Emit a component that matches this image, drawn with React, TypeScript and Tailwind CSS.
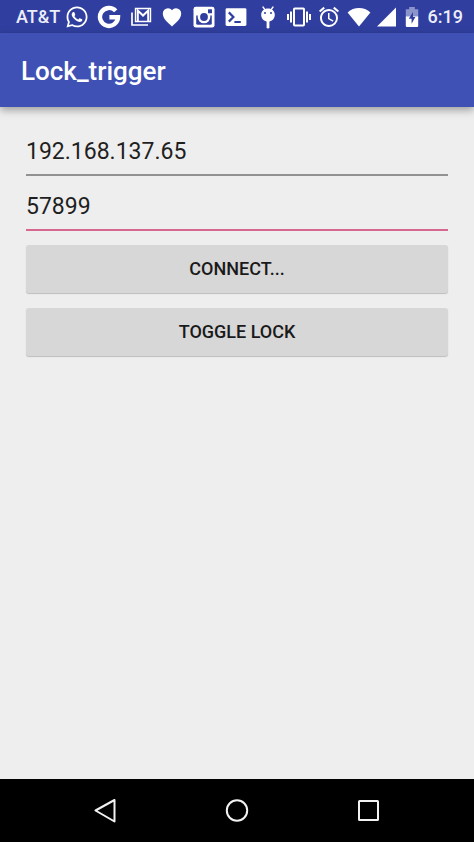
import React, { useState } from 'react';
import { FaWhatsapp } from 'react-icons/fa';
import { MdAlarm } from 'react-icons/md';

type IconProps = { className?: string };

const GoogleIcon: React.FC<IconProps> = ({ className }) => (
  <svg viewBox="0 0 24 24" className={className} fill="none" stroke="currentColor" strokeWidth="4.4">
    <path d="M18.700 5.900A9 9 0 1 0 21 12.200H12.400" />
  </svg>
);

const MailStackIcon: React.FC<IconProps> = ({ className }) => (
  <svg viewBox="0 0 24 24" className={className} fill="none" stroke="currentColor">
    <path d="M3 7.500V20h16" strokeWidth="1.700" />
    <path d="M6.500 3.500h15v13h-15z" strokeWidth="1.400" />
    <path d="M8.800 16V5.500l5.200 5 5.200-5V16" strokeWidth="2" />
  </svg>
);

const HeartIcon: React.FC<IconProps> = ({ className }) => (
  <svg viewBox="0 0 24 24" className={className} fill="currentColor">
    <path d="M12 21.400C7.200 17.400 2.800 13.600 2.800 8.600A5.200 5.200 0 0 1 8 3.300c1.600 0 3.100.8 4 2 .9-1.200 2.400-2 4-2a5.200 5.200 0 0 1 5.200 5.300c0 5-4.400 8.800-9.200 12.800z" />
  </svg>
);

const CameraIcon: React.FC<IconProps> = ({ className }) => (
  <svg viewBox="0 0 24 24" className={className}>
    <rect x="1.500" y="1.800" width="21" height="20.800" rx="2.400" fill="currentColor" />
    <path d="M4.200 10.500h15.600v7.800q0 1.500-1.500 1.500H5.700q-1.500 0-1.500-1.500z" fill="#303f9f" />
    <circle cx="12" cy="12" r="6.300" fill="currentColor" />
    <circle cx="12" cy="12" r="3.900" fill="#303f9f" />
    <rect x="16" y="4.300" width="4" height="4" rx=".5" fill="#303f9f" />
  </svg>
);

const TerminalIcon: React.FC<IconProps> = ({ className }) => (
  <svg viewBox="0 0 24 24" className={className}>
    <rect x="1.600" y="3.200" width="20.800" height="17.800" rx="1.400" fill="currentColor" />
    <path d="M4.800 7.400l4.600 4.600-4.600 4.600M10.400 17h6.400" fill="none" stroke="#303f9f" strokeWidth="2.200" />
  </svg>
);

const DebugIcon: React.FC<IconProps> = ({ className }) => (
  <svg viewBox="0 0 24 24" className={className}>
    <path d="M7 2l2.500 3.500M17 2l-2.500 3.500" stroke="currentColor" strokeWidth="1.300" strokeLinecap="round" />
    <path
      d="M12 3.600c4 0 6.800 2.600 6.800 6.200 0 3.900-3 6.900-6.800 6.900s-6.800-3-6.800-6.900c0-3.600 2.800-6.200 6.800-6.200z"
      fill="currentColor"
    />
    <path d="M12 15v7.200" stroke="currentColor" strokeWidth="2.800" strokeLinecap="round" />
    <circle cx="9" cy="8" r="1" fill="#303f9f" />
    <circle cx="15" cy="8" r="1" fill="#303f9f" />
  </svg>
);

const VibrateIcon: React.FC<IconProps> = ({ className }) => (
  <svg viewBox="0 0 24 24" className={className} fill="none" stroke="currentColor">
    <rect x="7" y="3.500" width="10" height="17" rx=".8" strokeWidth="2" />
    <path d="M4 6.500v11M20 6.500v11M1 9v6M23 9v6" strokeWidth="2" />
  </svg>
);

const WifiIcon: React.FC<IconProps> = ({ className }) => (
  <svg viewBox="0 0 24 24" className={className} fill="currentColor">
    <path d="M12 21.400L.6 7.400C3.800 4.500 7.700 3 12 3s8.200 1.500 11.400 4.400z" />
  </svg>
);

const SignalIcon: React.FC<IconProps> = ({ className }) => (
  <svg viewBox="0 0 22 22" className={className} fill="currentColor">
    <path d="M0 20.500L19 1.500v19z" />
  </svg>
);

const BatteryIcon: React.FC<IconProps> = ({ className }) => (
  <svg viewBox="0 0 14 22" className={className}>
    <path d="M4.200 1h5.600v2.200h3.400v8H.8v-8h3.400z" fill="#8c95cb" />
    <path d="M.8 10.500h12.400V20q0 1-1 1H1.800q-1 0-1-1z" fill="currentColor" />
    <path d="M8 6l-4.200 6.800h2.800v5L10.400 11H8z" fill="#303f9f" />
  </svg>
);

const StatusBar: React.FC = () => (
  <div className="flex h-[33px] items-center bg-[#303f9f] pl-4 pr-[11px] text-white">
    <span className="w-[49px] text-[18px] font-medium leading-6 text-[#eceefa]">AT&amp;T</span>
    <div className="mr-[7px] flex flex-1 items-center justify-between">
      <FaWhatsapp className="size-6" />
      <GoogleIcon className="size-6" />
      <MailStackIcon className="size-6" />
      <HeartIcon className="size-6" />
      <CameraIcon className="size-6" />
      <TerminalIcon className="size-6" />
      <DebugIcon className="size-6" />
    </div>
    <div className="flex items-center gap-1.5">
      <VibrateIcon className="size-6" />
      <MdAlarm className="size-6" />
      <WifiIcon className="size-6" />
      <SignalIcon className="size-[22px]" />
      <BatteryIcon className="h-[22px] w-[14px]" />
    </div>
    <time className="ml-[9px] text-[18px] font-medium leading-6 text-[#eceefa]">6:19</time>
  </div>
);

const NavBar: React.FC = () => (
  <nav className="flex h-[63px] items-center justify-center bg-black text-[#f2f2f2]">
    <button aria-label="Back" className="flex w-[132px] justify-center">
      <svg viewBox="0 0 24 24" className="size-6" fill="none" stroke="currentColor" strokeWidth="2" strokeLinejoin="round">
        <path d="M21.500 1v21.500L2.500 11.500z" />
      </svg>
    </button>
    <button aria-label="Home" className="flex w-[132px] justify-center">
      <svg viewBox="0 0 24 24" className="size-6" fill="none" stroke="currentColor" strokeWidth="2">
        <circle cx="12" cy="11.500" r="10.200" />
      </svg>
    </button>
    <button aria-label="Recent apps" className="flex w-[132px] justify-center">
      <svg viewBox="0 0 24 24" className="size-6" fill="none" stroke="currentColor" strokeWidth="2" strokeLinejoin="round">
        <rect x="2" y="2" width="19" height="19" rx=".5" />
      </svg>
    </button>
  </nav>
);

export default function App() {
  const [host, setHost] = useState('192.168.137.65');
  const [port, setPort] = useState('57899');

  const inputClass = 'h-[49px] w-full border-b-2 bg-transparent pt-0.5 text-[23px] text-[#1f1f1f] outline-none';
  const buttonClass =
    'h-12 w-full rounded-[3px] bg-[#d7d7d7] text-[18px] font-medium uppercase leading-6 text-[#1a1a1a] shadow-[0_1px_1px_0_#bdbdbd]';

  return (
    <div className="flex min-h-screen flex-col bg-[#eeeeee] font-['Roboto',sans-serif]">
      <StatusBar />
      <header className="flex h-[74px] items-center bg-[#3f51b5] px-[21px] pt-0.5 shadow-[0_3px_8px_0_rgba(0,0,0,0.35)]">
        <h1 className="text-[26px] font-medium leading-8 text-white">Lock_trigger</h1>
      </header>

      <main className="flex flex-1 flex-col px-[26px] pt-5">
        <input
          type="text"
          aria-label="IP address"
          value={host}
          onChange={(e) => setHost(e.target.value)}
          className={`${inputClass} border-[#929292]`}
        />
        <input
          type="text"
          aria-label="Port"
          value={port}
          onChange={(e) => setPort(e.target.value)}
          className={`${inputClass} mt-1.5 border-[#d6688f]`}
        />
        <div className="mt-[14px] flex flex-col gap-[15px]">
          <button className={buttonClass}>Connect...</button>
          <button className={buttonClass}>Toggle lock</button>
        </div>
      </main>

      <NavBar />
    </div>
  );
}
